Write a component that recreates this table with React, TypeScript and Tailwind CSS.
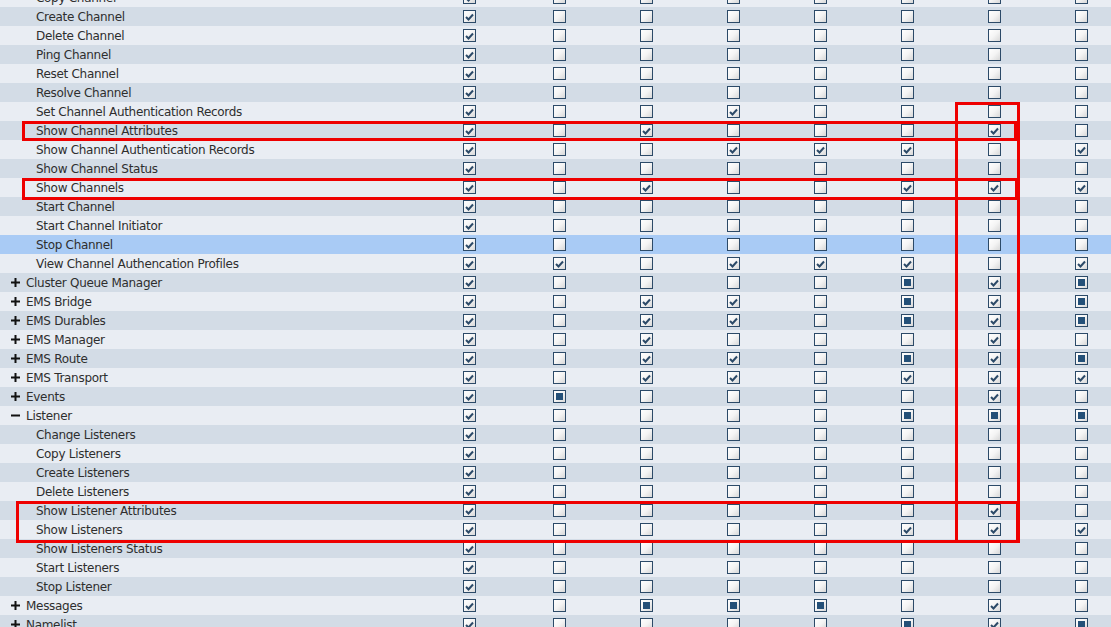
import React from 'react';

type Cell = 'c' | 'e' | 'i';

type Row = {
  label: string;
  kind: 'child' | 'group' | 'open';
  cells: string;
};

// c = checked, i = partial, . = empty
const rows: Row[] = [
  { label: 'Copy Channel', kind: 'child', cells: 'c.......' },
  { label: 'Create Channel', kind: 'child', cells: 'c.......' },
  { label: 'Delete Channel', kind: 'child', cells: 'c.......' },
  { label: 'Ping Channel', kind: 'child', cells: 'c.......' },
  { label: 'Reset Channel', kind: 'child', cells: 'c.......' },
  { label: 'Resolve Channel', kind: 'child', cells: 'c.......' },
  { label: 'Set Channel Authentication Records', kind: 'child', cells: 'c..c....' },
  { label: 'Show Channel Attributes', kind: 'child', cells: 'c.c...c.' },
  { label: 'Show Channel Authentication Records', kind: 'child', cells: 'c..ccc.c' },
  { label: 'Show Channel Status', kind: 'child', cells: 'c.......' },
  { label: 'Show Channels', kind: 'child', cells: 'c.c..ccc' },
  { label: 'Start Channel', kind: 'child', cells: 'c.......' },
  { label: 'Start Channel Initiator', kind: 'child', cells: 'c.......' },
  { label: 'Stop Channel', kind: 'child', cells: 'c.......' },
  { label: 'View Channel Authencation Profiles', kind: 'child', cells: 'cc.ccc.c' },
  { label: 'Cluster Queue Manager', kind: 'group', cells: 'c....ici' },
  { label: 'EMS Bridge', kind: 'group', cells: 'c.cc.ici' },
  { label: 'EMS Durables', kind: 'group', cells: 'c.cc.ici' },
  { label: 'EMS Manager', kind: 'group', cells: 'c.c...c.' },
  { label: 'EMS Route', kind: 'group', cells: 'c.cc.ici' },
  { label: 'EMS Transport', kind: 'group', cells: 'c.cc.ccc' },
  { label: 'Events', kind: 'group', cells: 'ci....c.' },
  { label: 'Listener', kind: 'open', cells: 'c....iii' },
  { label: 'Change Listeners', kind: 'child', cells: 'c.......' },
  { label: 'Copy Listeners', kind: 'child', cells: 'c.......' },
  { label: 'Create Listeners', kind: 'child', cells: 'c.......' },
  { label: 'Delete Listeners', kind: 'child', cells: 'c.......' },
  { label: 'Show Listener Attributes', kind: 'child', cells: 'c.....c.' },
  { label: 'Show Listeners', kind: 'child', cells: 'c....ccc' },
  { label: 'Show Listeners Status', kind: 'child', cells: 'c.......' },
  { label: 'Start Listeners', kind: 'child', cells: 'c.......' },
  { label: 'Stop Listener', kind: 'child', cells: 'c.......' },
  { label: 'Messages', kind: 'group', cells: 'c.iii.c.' },
  { label: 'Namelist', kind: 'group', cells: 'c....ici' },
];

function toCell(ch: string): Cell {
  if (ch === 'c') return 'c';
  if (ch === 'i') return 'i';
  return 'e';
}

function Box({ state }: { state: Cell }) {
  return (
    <span className="relative inline-flex h-[13px] w-[13px] items-center justify-center border border-[#2c4a68] bg-gradient-to-br from-white via-[#f4f4f4] to-[#d8d8d8]">
      {state === 'c' && (
        <svg width="9" height="8" viewBox="0 0 9 8" className="block">
          <path d="M1 4 L3.5 6.5 L8 1.5" fill="none" stroke="#2c4a68" strokeWidth="2" />
        </svg>
      )}
      {state === 'i' && <span className="block h-[7px] w-[7px] bg-[#245078]" />}
    </span>
  );
}

function Toggle({ open }: { open: boolean }) {
  return (
    <svg width="9" height="9" viewBox="0 0 9 9" className="block">
      <rect x="0" y="3.5" width="9" height="2" fill="#111" />
      {!open && <rect x="3.5" y="0" width="2" height="9" fill="#111" />}
    </svg>
  );
}

export default function App() {
  return (
    <div className="relative h-[627px] w-[1111px] overflow-hidden bg-[#e9edf3] font-['DejaVu_Sans',sans-serif] text-[12px] tracking-[-0.3px] text-[#2e2e2e]">
      <div className="-mt-[12px]">
        {rows.map((row, idx) => {
          const bg =
            row.label === 'Stop Channel'
              ? 'bg-[#a9cbf5]'
              : idx % 2 === 0
                ? 'bg-[#e9edf3]'
                : 'bg-[#d3dce6]';
          return (
            <div
              key={row.label + idx}
              className={`grid h-[19px] grid-cols-[423px_93px_repeat(7,87px)] items-center ${bg}`}
            >
              <div className="flex items-center whitespace-nowrap">
                {row.kind === 'child' ? (
                  <span className="pl-[36px]">{row.label}</span>
                ) : (
                  <>
                    <span className="ml-[11px] mr-[6px]">
                      <Toggle open={row.kind === 'open'} />
                    </span>
                    <span>{row.label}</span>
                  </>
                )}
              </div>
              {row.cells.split('').map((ch, i) => (
                <div key={i} className="flex items-center justify-center">
                  <Box state={toCell(ch)} />
                </div>
              ))}
            </div>
          );
        })}
      </div>

      {/* red annotation boxes */}
      <div className="pointer-events-none absolute left-[22px] top-[121px] h-[20px] w-[995px] border-[3px] border-[#ee0000]" />
      <div className="pointer-events-none absolute left-[22px] top-[178px] h-[22px] w-[996px] border-[3px] border-[#ee0000]" />
      <div className="pointer-events-none absolute left-[16px] top-[501px] h-[42px] w-[1003px] border-[3px] border-[#ee0000]" />
      <div className="pointer-events-none absolute left-[955px] top-[102px] h-[441px] w-[65px] border-[3px] border-[#ee0000]" />
    </div>
  );
}
